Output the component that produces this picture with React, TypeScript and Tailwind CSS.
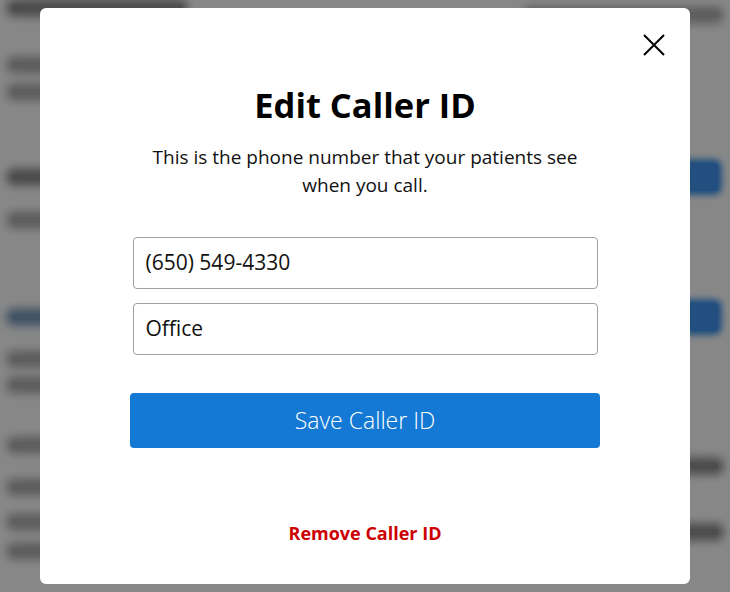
import React from "react";

// blurred text line seen through the overlay
const Blob: React.FC<{ className: string }> = ({ className }) => (
  <div className={`h-[6px] rounded-full ${className}`} />
);

const soft = "bg-[#b0b0b0] shadow-[0_0_9px_6px_#b0b0b0]";
const dark = "bg-[#909090] shadow-[0_0_9px_6px_#909090]";
const blueText = "bg-[#7d9cbc] shadow-[0_0_9px_6px_#7d9cbc]";
const BlueBtn: React.FC = () => (
  <div className="h-[28px] w-[80px] rounded bg-[#3f93ea] shadow-[0_0_6px_4px_#3f93ea]" />
);

const Backdrop: React.FC = () => (
  <div className="flex h-full flex-col bg-[#fafafa] pl-[12px] pr-[12px]">
    <div className="mt-[5px] flex items-start justify-between">
      <Blob className={`w-[170px] ${dark}`} />
      <Blob className={`mt-[7px] w-[190px] ${soft}`} />
    </div>
    <div className="mt-[44px] flex flex-col gap-[21px]">
      <Blob className={`w-[260px] ${soft}`} />
      <Blob className={`w-[180px] ${soft}`} />
    </div>
    <div className="mt-[68px] flex items-center justify-between">
      <Blob className={`w-[120px] ${dark}`} />
      <BlueBtn />
    </div>
    <Blob className={`mt-[26px] w-[220px] ${soft}`} />
    <div className="mt-[80px] flex items-center justify-between">
      <Blob className={`w-[150px] ${blueText}`} />
      <BlueBtn />
    </div>
    <div className="mt-[25px] flex flex-col gap-[20px]">
      <Blob className={`w-[300px] ${soft}`} />
      <Blob className={`w-[200px] ${soft}`} />
    </div>
    <div className="mt-[54px] flex items-start justify-between">
      <div className="flex flex-col gap-[36px]">
        <Blob className={`w-[280px] ${soft}`} />
        <Blob className={`w-[240px] ${soft}`} />
      </div>
      <Blob className={`mt-[21px] w-[60px] ${dark}`} />
    </div>
    <div className="mt-[29px] flex items-start justify-between">
      <div className="flex flex-col gap-[23px]">
        <Blob className={`w-[260px] ${soft}`} />
        <Blob className={`w-[220px] ${soft}`} />
      </div>
      <Blob className={`mt-[10px] w-[60px] ${dark}`} />
    </div>
  </div>
);

export default function App() {
  return (
    <div className="relative h-[592px] w-[730px] overflow-hidden bg-white font-['Open_Sans',sans-serif]">
      <Backdrop />
      <div className="absolute inset-0 bg-black/[0.46]" />
      <div className="absolute left-[40px] top-[8px] flex h-[576px] w-[650px] flex-col items-center rounded-md bg-white">
        <button className="absolute right-[24px] top-[25px] text-black">
          <svg viewBox="0 0 24 24" className="h-6 w-6" fill="none" stroke="currentColor" strokeWidth="2">
            <path d="M2 2l20 20M22 2L2 22" />
          </svg>
        </button>
        <h1 className="mt-[80px] text-[34.5px] font-bold leading-none text-black">Edit Caller ID</h1>
        <p className="mt-[20px] w-[450px] text-center text-[19px] leading-[28px] text-[#111]">
          This is the phone number that your patients see when you call.
        </p>
        <div className="mt-[38px] flex w-[465px] flex-col gap-[14px]">
          <div className="flex h-[52px] items-center rounded border border-[#a0a0a0] px-3 text-[21px] text-[#111]">
            (650) 549-4330
          </div>
          <div className="flex h-[52px] items-center rounded border border-[#a0a0a0] px-3 text-[21px] text-[#111]">
            Office
          </div>
        </div>
        <button className="mt-[38px] flex h-[55px] w-[470px] items-center justify-center rounded-sm bg-[#1479d4] text-[23px] font-light text-white">
          Save Caller ID
        </button>
        <button className="mt-[72px] text-[18px] font-bold text-[#cc0000]">Remove Caller ID</button>
      </div>
    </div>
  );
}
